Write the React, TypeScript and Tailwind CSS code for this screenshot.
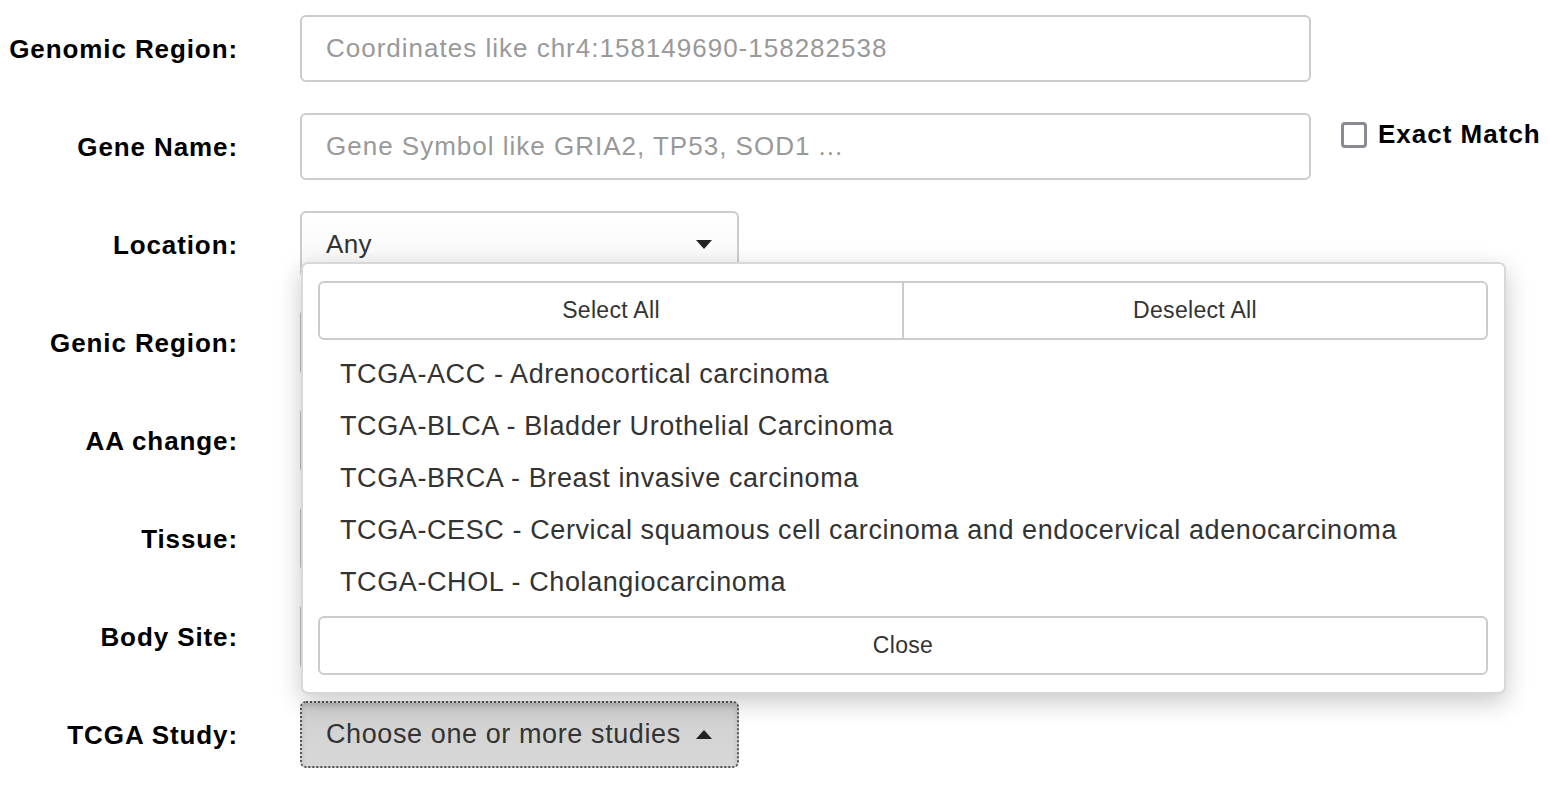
import React from "react";

const font = { fontFamily: '"Liberation Sans", Arial, sans-serif' };

function Label({ children }: { children: React.ReactNode }) {
  return (
    <div className="w-[238px] shrink-0 text-right text-[26px] tracking-[0.9px] font-bold text-black leading-none whitespace-nowrap">
      {children}
    </div>
  );
}

function TextInput({ placeholder }: { placeholder: string }) {
  return (
    <div className="w-[1011px] shrink-0 h-[67px] rounded-[6px] border-2 border-[#cccccc] bg-white flex items-center pl-[24px] text-[26px] tracking-[1px] text-[#999999] whitespace-nowrap">
      {placeholder}
    </div>
  );
}

function Caret({ up = false }: { up?: boolean }) {
  return (
    <svg width="16" height="9" viewBox="0 0 16 9" className="shrink-0">
      {up ? <path d="M0 9 L8 0 L16 9 Z" fill="#222" /> : <path d="M0 0 L16 0 L8 9 Z" fill="#222" />}
    </svg>
  );
}

function SelectBox({ value }: { value: string }) {
  return (
    <div className="w-[439px] shrink-0 h-[67px] rounded-[6px] border-2 border-[#cccccc] bg-gradient-to-b from-white to-[#f7f7f7] flex items-center justify-between pl-[24px] pr-[25px] text-[26px] tracking-[0.3px] text-[#333333]">
      <span>{value}</span>
      <Caret />
    </div>
  );
}

function HiddenSelect() {
  return <div className="w-[439px] shrink-0 h-[67px] rounded-[6px] border-2 border-[#bdbdbd] bg-white" />;
}

const studies = [
  "TCGA-ACC - Adrenocortical carcinoma",
  "TCGA-BLCA - Bladder Urothelial Carcinoma",
  "TCGA-BRCA - Breast invasive carcinoma",
  "TCGA-CESC - Cervical squamous cell carcinoma and endocervical adenocarcinoma",
  "TCGA-CHOL - Cholangiocarcinoma",
];

function StudyMenu() {
  return (
    <div className="absolute left-[1px] bottom-[calc(100%+7px)] w-[1205px] rounded-[7px] border-2 border-[#d8d8d8] bg-white shadow-[0_8px_24px_rgba(0,0,0,0.22)] pl-[15px] pr-[16px] pt-[17px] pb-[17px] z-10">
      <div className="flex h-[59px] rounded-[6px] border-2 border-[#cccccc] text-[23px] tracking-[0.3px] text-[#333333]">
        <div className="flex-1 flex items-center justify-center border-r-2 border-[#cccccc]">Select All</div>
        <div className="flex-1 flex items-center justify-center">Deselect All</div>
      </div>
      <div className="pt-[8px] pb-[8px]">
        {studies.map((s) => (
          <div key={s} className="h-[52px] flex items-center pl-[22px] text-[27px] tracking-[0.6px] text-[#333333] whitespace-nowrap">
            {s}
          </div>
        ))}
      </div>
      <div className="h-[59px] w-[1170px] rounded-[6px] border-2 border-[#cccccc] flex items-center justify-center text-[23px] tracking-[0.3px] text-[#333333]">
        Close
      </div>
    </div>
  );
}

export default function App() {
  return (
    <div className="min-h-[798px] w-[1550px] bg-white overflow-hidden" style={font}>
      <div className="flex flex-col gap-[31px] pt-[15px]">
        <div className="flex items-center gap-[62px]">
          <Label>Genomic Region:</Label>
          <TextInput placeholder="Coordinates like chr4:158149690-158282538" />
        </div>
        <div className="flex items-center gap-[62px]">
          <Label>Gene Name:</Label>
          <TextInput placeholder="Gene Symbol like GRIA2, TP53, SOD1 ..." />
          <label className="-ml-[32px] -mt-[24px] flex items-center gap-[11px] text-[26px] tracking-[1px] font-bold text-black whitespace-nowrap">
            <span className="w-[26px] h-[26px] shrink-0 rounded-[4px] border-[3px] border-[#8a8a92] bg-white" />
            Exact Match
          </label>
        </div>
        <div className="flex items-center gap-[62px]">
          <Label>Location:</Label>
          <SelectBox value="Any" />
        </div>
        <div className="flex items-center gap-[62px]">
          <Label>Genic Region:</Label>
          <HiddenSelect />
        </div>
        <div className="flex items-center gap-[62px]">
          <Label>AA change:</Label>
          <HiddenSelect />
        </div>
        <div className="flex items-center gap-[62px]">
          <Label>Tissue:</Label>
          <HiddenSelect />
        </div>
        <div className="flex items-center gap-[62px]">
          <Label>Body Site:</Label>
          <HiddenSelect />
        </div>
        <div className="flex items-center gap-[62px]">
          <Label>TCGA Study:</Label>
          <div className="relative">
            <StudyMenu />
            <div className="w-[439px] h-[67px] rounded-[6px] border-2 border-dotted border-[#555555] bg-gradient-to-b from-[#d0d0d0] to-[#d8d8d8] flex items-center justify-between pl-[24px] pr-[25px] text-[27px] tracking-[0.6px] text-[#333333] whitespace-nowrap shadow-[inset_0_3px_5px_rgba(0,0,0,0.12)]">
              <span>Choose one or more studies</span>
              <Caret up />
            </div>
          </div>
        </div>
      </div>
    </div>
  );
}
